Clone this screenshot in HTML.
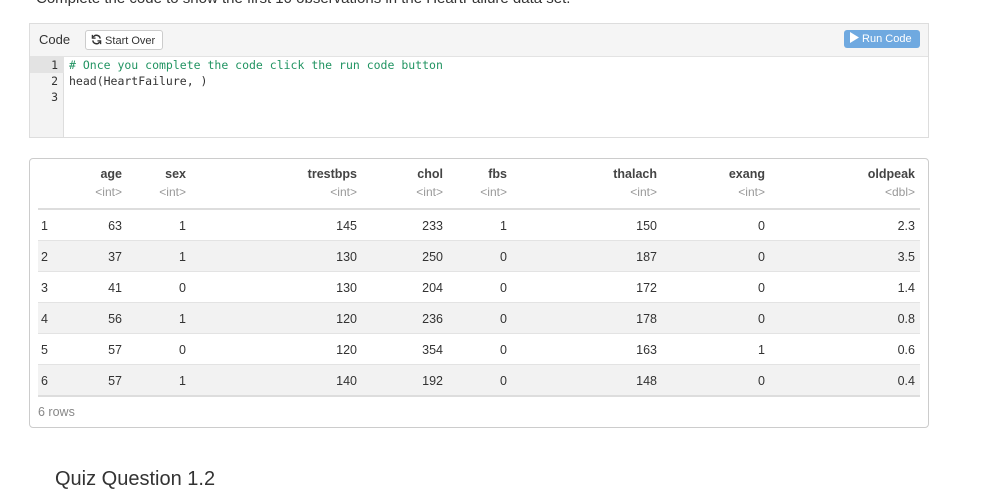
<!DOCTYPE html>
<html><head><style>
*{margin:0;padding:0;box-sizing:border-box}
body{width:992px;height:475px;overflow:hidden;background:#fff;font-family:"Liberation Sans",Arial,sans-serif;position:relative;color:#333}
.abs{position:absolute}
.top{left:36px;top:-10px;font-size:15px;color:#333;white-space:nowrap}
.code{left:29px;top:23px;width:900px;height:115px;border:1px solid #ddd;background:#fff}
.hdr{height:33px;background:#f5f5f5;border-bottom:1px solid #e3e3e3;position:relative}
.hdr .lbl{position:absolute;left:9px;top:8px;font-size:13px;color:#333}
.so{position:absolute;left:55px;top:6px;height:20px;width:78px;border:1px solid #ccc;border-radius:3px;background:#fff;font-size:11px;padding:3px 0 0 5px;color:#333}
.rc{position:absolute;right:8px;top:6px;height:18px;width:76px;background:#6fa9e0;border-radius:3px;color:#fff;font-size:11px;padding:2px 0 0 5px}
.gut{position:absolute;left:0;top:33px;width:34px;height:80px;background:#f3f3f3;border-right:1px solid #ddd}
.mono{font-family:"DejaVu Sans Mono","Liberation Mono",monospace;font-size:11.5px;line-height:16px}
.tbl{left:29px;top:158px;width:900px;height:270px;border:1px solid #ccc;border-radius:4px}
.c{position:absolute;font-size:12.5px;text-align:right;white-space:nowrap}
.band{position:absolute;left:38px;width:882px;height:31px}
</style></head><body>
<div class="abs top">Complete the code to show the first 10 observations in the HeartFailure data set.</div>
<div class="abs code">
 <div class="hdr"><span class="lbl">Code</span>
  <div class="so"><svg width="11" height="11" viewBox="0 0 12 12" style="vertical-align:-1px"><path d="M10 5A4 4 0 0 0 2.5 3.5M2 7a4 4 0 0 0 7.5 1.5" fill="none" stroke="#333" stroke-width="1.6"/><path d="M1.5 1v3.5H5M10.5 11V7.5H7" fill="none" stroke="#333" stroke-width="1.4"/></svg> Start Over</div>
  <div class="rc"><svg width="10" height="11" viewBox="0 0 10 11" style="vertical-align:-1px"><path d="M1 0L10 5.5 1 11z" fill="#fff"/></svg> Run Code</div>
 </div>
 <div class="gut"></div>
 <div class="abs" style="left:0;top:33px;width:34px;height:16px;background:#e3e3e3"></div>
 <div class="abs mono" style="left:0;top:33px;width:28px;text-align:right;color:#333">1<br>2<br>3</div>
 <div class="abs mono" style="left:39px;top:33px;white-space:pre"><span style="color:#219462"># Once you complete the code click the run code button</span>
head(HeartFailure, )</div>
</div>
<div class="abs tbl"></div>
<div class="band" style="top:241px;background:#f2f2f2"></div>
<div class="band" style="top:303px;background:#f2f2f2"></div>
<div class="band" style="top:365px;background:#f2f2f2"></div>
<div class="abs" style="left:38px;top:208px;width:882px;height:2px;background:#ddd"></div>
<div class="abs" style="left:38px;top:240px;width:882px;height:1px;background:#e3e3e3"></div>
<div class="abs" style="left:38px;top:271px;width:882px;height:1px;background:#e3e3e3"></div>
<div class="abs" style="left:38px;top:302px;width:882px;height:1px;background:#e3e3e3"></div>
<div class="abs" style="left:38px;top:333px;width:882px;height:1px;background:#e3e3e3"></div>
<div class="abs" style="left:38px;top:364px;width:882px;height:1px;background:#e3e3e3"></div>
<div class="abs" style="left:38px;top:395px;width:882px;height:2px;background:#ddd"></div>
<div id="t"></div>
<div class="abs" style="left:38px;top:405px;font-size:12.5px;color:#888">6 rows</div>
<div class="abs" style="left:55px;top:468px;font-size:20px;color:#333">Quiz Question 1.2</div>
<script>
var cols=[["age",122],["sex",186],["trestbps",357],["chol",443],["fbs",507],["thalach",657],["exang",765],["oldpeak",915]];
var types=["int","int","int","int","int","int","int","dbl"];
var rows=[[63,1,145,233,1,150,0,"2.3"],[37,1,130,250,0,187,0,"3.5"],[41,0,130,204,0,172,0,"1.4"],[56,1,120,236,0,178,0,"0.8"],[57,0,120,354,0,163,1,"0.6"],[57,1,140,192,0,148,0,"0.4"]];
var h="";
cols.forEach(function(c,i){
h+='<div class="c" style="right:'+(992-c[1])+'px;top:167px;font-weight:bold;color:#444">'+c[0]+'</div>';
h+='<div class="c" style="right:'+(992-c[1])+'px;top:185px;color:#999;font-size:12px">&lt;'+types[i]+'&gt;</div>';
});
rows.forEach(function(r,j){
var y=219+j*31;
h+='<div class="c" style="left:41px;top:'+y+'px">'+(j+1)+'</div>';
r.forEach(function(v,i){h+='<div class="c" style="right:'+(992-cols[i][1])+'px;top:'+y+'px">'+v+'</div>';});
});
document.getElementById("t").innerHTML=h;
</script>
</body></html>
